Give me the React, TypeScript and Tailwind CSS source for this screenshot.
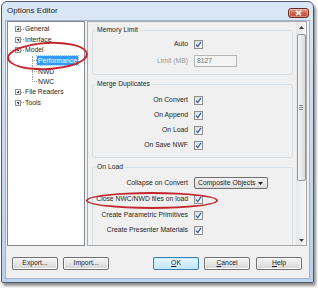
import React from "react";

const F = { fontFamily: '"Liberation Sans", Arial, sans-serif' };

function Check() {
  return (
    <div className="w-[9px] h-[9px] border border-[#8e8f8f] bg-gradient-to-br from-[#dadee3] to-[#fbfbfb] flex items-center justify-center shrink-0">
      <svg width="7" height="7" viewBox="0 0 7 7">
        <path d="M1 3.6 L2.8 5.6 L6 0.8" fill="none" stroke="#2f5a9a" strokeWidth="1.2" />
      </svg>
    </div>
  );
}

function Row({ label, children, h = "h-[10px]", dim = false }: { label: string; children: React.ReactNode; h?: string; dim?: boolean }) {
  return (
    <div className={`flex items-center ${h}`}>
      <div className={`w-[96px] text-right pr-[1px] ${dim ? "text-[#9a9a9a]" : "text-[#1e1e1e]"}`}>{label}</div>
      <div className="ml-[5px] flex items-center">{children}</div>
    </div>
  );
}

function Group({ title, children, cls }: { title: string; children: React.ReactNode; cls: string }) {
  return (
    <fieldset className={`border border-[#d5dfe5] rounded-[3px] ${cls}`}>
      <legend className="ml-[2px] px-[2px] leading-[8px] text-[#1e1e1e]">{title}</legend>
      {children}
    </fieldset>
  );
}

function Plus({ minus = false }: { minus?: boolean }) {
  return (
    <div className="w-[6px] h-[6px] border border-[#919191] bg-gradient-to-br from-white to-[#d6d6d6] relative shrink-0">
      <div className="absolute left-[1px] top-[1.5px] w-[2px] h-[1px] bg-[#3a3a3a]" />
      {!minus && <div className="absolute left-[1.5px] top-[1px] w-[1px] h-[2px] bg-[#3a3a3a]" />}
    </div>
  );
}

function TreeTop({ label, minus = false }: { label: string; minus?: boolean }) {
  return (
    <div className="flex items-center h-[10.5px] pl-[7px]">
      <Plus minus={minus} />
      <div className="w-[3px] border-t border-dotted border-[#a0a0a0]" />
      <span className="ml-[1px] text-[#1e1e1e]">{label}</span>
    </div>
  );
}

function TreeChild({ label, selected = false, last = false }: { label: string; selected?: boolean; last?: boolean }) {
  return (
    <div className="flex items-center h-[10.5px] pl-[24px] relative">
      <div className={`absolute left-[24px] top-0 border-l border-dotted border-[#a0a0a0] ${last ? "h-[5px]" : "h-full"}`} />
      <div className="w-[5px] border-t border-dotted border-[#a0a0a0]" />
      <span className={`px-[1px] leading-[9px] ${selected ? "bg-[#3399ff] text-white outline outline-1 outline-dotted outline-[#8fc4ff]" : "text-[#1e1e1e]"}`}>{label}</span>
    </div>
  );
}

function Btn({ children, def = false, cls = "" }: { children: React.ReactNode; def?: boolean; cls?: string }) {
  return (
    <div
      className={`w-[46px] h-[13px] rounded-[2px] border flex items-center justify-center text-[#1e1e1e] ${
        def
          ? "border-[#3c7fb1] bg-gradient-to-b from-[#eaf6fd] to-[#bee6fd] shadow-[inset_0_0_0_1px_#c8eafc]"
          : "border-[#707070] bg-gradient-to-b from-[#f3f3f3] via-[#e6e6e6] to-[#d3d3d3] shadow-[inset_0_0_0_1px_#fbfbfb]"
      } ${cls}`}
    >
      {children}
    </div>
  );
}

export default function App() {
  return (
    <div className="w-[318px] h-[288px] bg-white relative overflow-hidden text-[6.8px]" style={F}>
      <div className="ml-[1px] mt-[1px] w-[313px] h-[282px] border border-[#4a5a70] rounded-t-[6px] rounded-b-[2px] bg-gradient-to-b from-[#dbe7f4] via-[#c9dbef] to-[#bcd2ec] shadow-[2px_3px_3px_rgba(0,0,0,0.45)] flex flex-col">
        <div className="h-[18px] flex items-start shrink-0">
          <div className="ml-[5px] mt-[4px] text-[8px] text-[#1e1e1e] leading-[10px]">Options Editor</div>
          <div className="ml-auto mr-[4px] mt-[6px] w-[21px] h-[10px] rounded-[3px] border border-[#6b2b23] bg-gradient-to-b from-[#e8a493] via-[#d0664e] to-[#c24c35] flex items-center justify-center shadow-[inset_0_0_0_1px_rgba(255,255,255,0.35)]">
            <svg width="7" height="6" viewBox="0 0 7 6">
              <path d="M1 0.8 L6 5.2 M6 0.8 L1 5.2" stroke="white" strokeWidth="1.6" />
            </svg>
          </div>
        </div>
        <div className="mx-[3px] mb-[3px] flex-1 bg-[#f0f0f0] border border-[#9fb4cc] flex flex-col">
          <div className="flex h-[225px] pl-[1px]">
            <div className="w-[78px] h-full bg-white border border-[#828790] pt-[2px] relative">
              <TreeTop label="General" />
              <TreeTop label="Interface" />
              <TreeTop label="Model" minus />
              <TreeChild label="Performance" selected />
              <TreeChild label="NWD" />
              <TreeChild label="NWC" last />
              <TreeTop label="File Readers" />
              <TreeTop label="Tools" />
            </div>
            <div className="ml-[2px] w-[220px] h-full border border-[#aaaaaa] flex overflow-hidden">
              <div className="flex-1 pl-[4px] pr-[3px] pt-[4px] flex flex-col gap-[5px] overflow-hidden">
                <Group title="Memory Limit" cls="pt-[5px] pb-[7px] flex flex-col gap-[6px]">
                  <Row label="Auto"><Check /></Row>
                  <Row label="Limit (MB)" h="h-[12px]" dim>
                    <div className="w-[43px] h-[12px] border border-[#b5b5b5] bg-[#f4f4f4] text-[#6d6d6d] pl-[2px] flex items-center">8127</div>
                  </Row>
                </Group>
                <Group title="Merge Duplicates" cls="pt-[7px] pb-[7px] flex flex-col gap-[5px]">
                  <Row label="On Convert"><Check /></Row>
                  <Row label="On Append"><Check /></Row>
                  <Row label="On Load"><Check /></Row>
                  <Row label="On Save NWF"><Check /></Row>
                </Group>
                <Group title="On Load" cls="pt-[6px] pb-[12px] flex flex-col gap-[5.5px]">
                  <Row label="Collapse on Convert" h="h-[12px]">
                    <div className="w-[74px] h-[12px] border border-[#707070] rounded-[2px] bg-gradient-to-b from-[#f3f3f3] to-[#dcdcdc] flex items-center pl-[3px] text-[#1e1e1e]">
                      <span>Composite Objects</span>
                      <svg className="ml-auto mr-[4px]" width="5" height="3" viewBox="0 0 5 3"><path d="M0 0 H5 L2.5 3 Z" fill="#222" /></svg>
                    </div>
                  </Row>
                  <Row label="Close NWC/NWD files on load"><Check /></Row>
                  <Row label="Create Parametric Primitives"><Check /></Row>
                  <Row label="Create Presenter Materials"><Check /></Row>
                </Group>
              </div>
              <div className="w-[10px] h-full bg-gradient-to-r from-[#e7e7e7] to-[#f5f5f5] flex flex-col items-center">
                <div className="h-[11px] flex items-center justify-center">
                  <svg width="5" height="3" viewBox="0 0 5 3"><path d="M0 3 H5 L2.5 0 Z" fill="#404040" /></svg>
                </div>
                <div className="w-[9px] h-[147px] mt-[1px] rounded-[2px] border border-[#979797] bg-gradient-to-r from-[#f5f5f5] via-[#e9e9e9] to-[#dadada] flex items-center justify-center">
                  <div className="flex flex-col gap-[1px]">
                    <div className="w-[4px] h-[1px] bg-[#8a8a8a]" />
                    <div className="w-[4px] h-[1px] bg-[#8a8a8a]" />
                    <div className="w-[4px] h-[1px] bg-[#8a8a8a]" />
                  </div>
                </div>
                <div className="mt-auto h-[10px] flex items-center justify-center">
                  <svg width="5" height="3" viewBox="0 0 5 3"><path d="M0 0 H5 L2.5 3 Z" fill="#404040" /></svg>
                </div>
              </div>
            </div>
          </div>
          <div className="flex mt-[11px] pl-[6px]">
            <Btn>Export...</Btn>
            <Btn cls="ml-[5px]">Import...</Btn>
            <Btn def cls="ml-[44px]"><span><u>O</u>K</span></Btn>
            <Btn cls="ml-[5px]"><span><u>C</u>ancel</span></Btn>
            <Btn cls="ml-[6px]"><span><u>H</u>elp</span></Btn>
          </div>
        </div>
      </div>
      <div className="absolute left-[7px] top-[42px] w-[81px] h-[28px] rounded-[50%] border-2 border-[#c1272d] -rotate-[3deg]" />
      <div className="absolute left-[86px] top-[192px] w-[132px] h-[17px] rounded-[50%] border-2 border-[#c1272d]" />
    </div>
  );
}
